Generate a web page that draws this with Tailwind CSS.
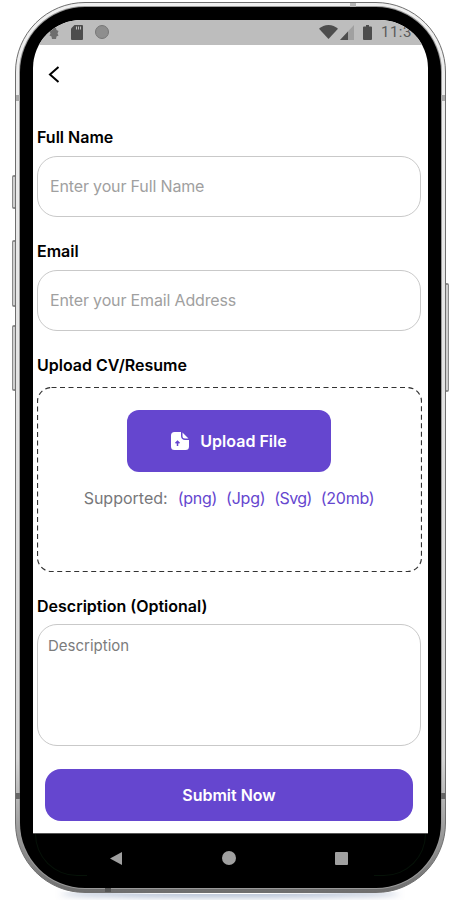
<!DOCTYPE html>
<html>
<head>
<meta charset="utf-8">
<script src="https://cdn.jsdelivr.net/npm/@tailwindcss/browser@4"></script>
</head>
<body class="bg-white font-['Inter',sans-serif] overflow-hidden">
<div class="relative w-[460px] h-[900px] pt-[2px] pl-[15px]">
  <!-- cast shadow under the phone -->
  <div class="absolute left-[60px] top-[888px] w-[340px] h-[6px] rounded-[50%] shadow-[0_3px_6px_rgba(70,100,150,0.5)]"></div>
  <!-- side buttons -->
  <div class="absolute left-[12px] top-[175px] w-[3px] h-[34px] rounded-l-[2px] bg-[#cfcfcf] border-l border-y-2 border-[#8a8a8a]"></div>
  <div class="absolute left-[12px] top-[240px] w-[3px] h-[67px] rounded-l-[2px] bg-[#cfcfcf] border-l border-y-2 border-[#8a8a8a]"></div>
  <div class="absolute left-[12px] top-[325px] w-[3px] h-[66px] rounded-l-[2px] bg-[#cfcfcf] border-l border-y-2 border-[#8a8a8a]"></div>
  <div class="absolute left-[446px] top-[283px] w-[3px] h-[109px] rounded-r-[2px] bg-[#cfcfcf] border-r border-y-2 border-[#8a8a8a]"></div>
  <!-- body -->
  <div class="relative w-[431px] h-[891px] rounded-[70px] bg-linear-to-b from-[#f0f0f0] via-[#d6d6d6] via-85% to-[#6e6e6e] border border-[#6f6f6f] p-[4px]">
    <!-- antenna bands -->
    <div class="absolute left-[334px] top-0 w-[6px] h-[4px] bg-[#b5b5b5]"></div>
    <div class="absolute left-0 top-[92px] w-[4px] h-[6px] bg-[#a8a8a8]"></div>
    <div class="absolute right-0 top-[92px] w-[4px] h-[6px] bg-[#a8a8a8]"></div>
    <div class="absolute left-0 top-[790px] w-[4px] h-[6px] bg-[#666]"></div>
    <div class="absolute right-0 top-[790px] w-[4px] h-[6px] bg-[#666]"></div>
    <div class="absolute left-[89px] bottom-0 w-[6px] h-[4px] bg-[#555]"></div>
    <div class="w-full h-full rounded-[65px] bg-black pt-[13px] px-[13px] overflow-hidden shadow-[0_0_0_1px_#9a9a9a]">
      <div class="w-[395px] h-[813px] bg-white rounded-t-[48px] overflow-hidden flex flex-col">
        <!-- status bar -->
        <div class="h-[25px] shrink-0 bg-[#bdbdbd] relative">
          <svg class="absolute left-[16px] top-[8px] w-[10px] h-[11px]" viewBox="0 0 10 11"><path fill="#6e6e6e" d="M3 0h4l.5 2 2 1-1 2.500 1 2-2 1L7 11H3l-.5-2.500-2-1 1-2-1-2.500 2-1z"/></svg>
          <svg class="absolute left-[38px] top-[5px] w-[12px] h-[15px]" viewBox="0 0 12 15"><path fill="#4d4d4d" d="M3.500 0H11a1 1 0 0 1 1 1v13a1 1 0 0 1-1 1H1a1 1 0 0 1-1-1V3.500z"/><path fill="#bdbdbd" d="M5 1.500h1v3H5zM7 1.500h1v3H7zM9 1.500h1v3H9z"/></svg>
          <div class="absolute left-[62px] top-[5px] w-[14px] h-[14px] rounded-full bg-[#8e8e8e] border border-[#777]"></div>
          <svg class="absolute left-[286px] top-[5px] w-[19px] h-[14px]" viewBox="0 0 18 13" preserveAspectRatio="none"><path fill="#4d4d4d" d="M0 3.500C2.500 1.200 5.500 0 9 0s6.500 1.200 9 3.500L9 13z"/></svg>
          <svg class="absolute left-[307px] top-[5px] w-[14px] h-[15px]" viewBox="0 0 14 14" preserveAspectRatio="none"><path fill="#a0a0a0" d="M14 0v14H0z"/><path fill="#4d4d4d" d="M8 6v8H0z"/></svg>
          <svg class="absolute left-[330px] top-[5px] w-[9px] h-[15px]" viewBox="0 0 9 15"><path fill="#4d4d4d" d="M3 0h3v1.500h2a1 1 0 0 1 1 1V14a1 1 0 0 1-1 1H1a1 1 0 0 1-1-1V2.500a1 1 0 0 1 1-1h2z"/></svg>
          <div class="absolute left-[348px] top-[2px] text-[15px] leading-[20px] text-[#5a5a5a] font-['Roboto',sans-serif] tracking-[0.5px] whitespace-nowrap">11:3</div>
        </div>
        <!-- form -->
        <div class="flex-1 pl-[4px] pr-[6px] flex flex-col relative">
          <div class="h-[81px] shrink-0 pl-[11px] pt-[21px]">
            <svg class="w-[12px] h-[17px] block" viewBox="0 0 12 17" fill="none" stroke="#000" stroke-width="2"><path d="M10.500 1 2 8.500 10.500 16"/></svg>
          </div>
          <label class="block h-[23px] text-[16px] leading-[23px] font-semibold text-black">Full Name</label>
          <div class="mt-[7px] h-[61px] w-[384px] rounded-[20px] border border-[#c9c9c9] flex items-center pl-[12px] pb-[2px] text-[16px] tracking-[-0.15px] text-[#a0a0a0]">Enter your Full Name</div>
          <label class="block mt-[23px] h-[23px] text-[16px] leading-[23px] font-semibold text-black">Email</label>
          <div class="mt-[7px] h-[61px] w-[384px] rounded-[20px] border border-[#c9c9c9] flex items-center pl-[12px] pb-[2px] text-[16px] tracking-[-0.15px] text-[#a0a0a0]">Enter your Email Address</div>
          <label class="block mt-[23px] h-[23px] text-[16px] leading-[23px] font-semibold text-black">Upload CV/Resume</label>
          <div class="relative mt-[10px] h-[185px] w-[385px] flex flex-col items-center pt-[23px] pr-[1px]">
            <svg class="absolute inset-0 w-[385px] h-[185px]" viewBox="0 0 385 185" fill="none"><rect x="0.500" y="0.500" width="384" height="184" rx="14" stroke="#333" stroke-width="1.200" stroke-dasharray="5 3.500"/></svg>
            <div class="w-[204px] h-[62px] rounded-[12px] bg-[#6546cf] flex items-center justify-center gap-[11px] text-white text-[16px] font-semibold">
              <svg class="w-[18px] h-[18px]" viewBox="0 0 18 18"><path fill="#fff" d="M3.500 0H10v3.500A4 4 0 0 0 14 8h4v6.500a3.500 3.500 0 0 1-3.500 3.500h-11A3.500 3.500 0 0 1 0 14.500v-11A3.500 3.500 0 0 1 3.500 0z"/><path fill="#fff" d="M11.500.500 17.500 6.500H14a2.500 2.500 0 0 1-2.500-2.500z"/><path fill="none" stroke="#6546cf" stroke-width="1.500" d="M6.500 14V9.500M4.500 11.200l2-2 2 2"/></svg>
              <span>Upload File</span>
            </div>
            <div class="mt-[15px] flex items-center gap-[9px] text-[16px] leading-[22px] text-[#6546cf] tracking-[-0.25px] whitespace-nowrap">
              <span class="text-[#77777a] mr-[1px] tracking-normal">Supported:</span><span>(png)</span><span>(Jpg)</span><span class="tracking-[-0.6px]">(Svg)</span><span>(20mb)</span>
            </div>
          </div>
          <label class="block mt-[23px] h-[23px] text-[16px] leading-[23px] font-semibold text-black">Description (Optional)</label>
          <div class="mt-[6px] h-[122px] w-[384px] rounded-[20px] border border-[#c9c9c9] pl-[10px] pt-[11px] text-[15px] leading-[20px] text-[#7c7c7c]">Description</div>
          <div class="mt-[23px] ml-[8px] w-[368px] h-[52px] rounded-[16px] bg-[#6546cf] flex items-center justify-center text-white text-[16px] font-semibold">Submit Now</div>
        </div>
      </div>
      <!-- nav bar -->
      <div class="h-[55px] w-[395px] relative border-t border-[#555]">
        <div class="absolute left-[2px] top-0 w-[52px] h-[42px] rounded-bl-[48px] border-l border-b border-[#061208]"></div>
        <div class="absolute right-[2px] top-0 w-[52px] h-[42px] rounded-br-[48px] border-r border-b border-[#061208]"></div>
        <svg class="absolute left-[77px] top-[18px] w-[12px] h-[13px]" viewBox="0 0 13 14" preserveAspectRatio="none"><path fill="#a0a0a0" d="M13 0v14L0 7z"/></svg>
        <div class="absolute left-[189px] top-[17px] w-[14px] h-[14px] rounded-full bg-[#a0a0a0]"></div>
        <div class="absolute left-[302px] top-[18px] w-[13px] h-[13px] rounded-[1px] bg-[#a0a0a0]"></div>
      </div>
    </div>
  </div>
</div>
</body>
</html>
